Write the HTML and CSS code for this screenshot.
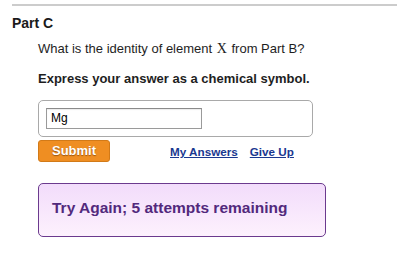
FILE: index.html
```
<!DOCTYPE html>
<html>
<head>
<meta charset="utf-8">
<link rel="stylesheet" href="styles.css">
</head>
<body>
<div class="page">
  <div class="rule"></div>
  <h2 class="part-title">Part C</h2>
  <div class="content">
    <p class="question">What is the identity of element <span class="math">X</span> from Part B?</p>
    <p class="instruction">Express your answer as a chemical symbol.</p>
    <div class="answer-box">
      <div class="answer-input">Mg</div>
    </div>
    <div class="actions">
      <button class="submit">Submit</button>
      <div class="links">
        <a class="link" href="#">My Answers</a>
        <a class="link" href="#">Give Up</a>
      </div>
    </div>
    <div class="feedback">Try Again; 5 attempts remaining</div>
  </div>
</div>
</body>
</html>
```
FILE: styles.css
```
html, body {
  margin: 0;
  padding: 0;
  background: #ffffff;
}
body {
  font-family: "Liberation Sans", Arial, sans-serif;
  color: #1e1e1e;
}
.page {
  padding: 4px 0 0 12px;
}
.rule {
  height: 2px;
  background: #cccccc;
}
.part-title {
  margin: 9px 0 0 0;
  font-size: 14px;
  line-height: 16px;
  font-weight: bold;
  color: #1a1a1a;
}
.content {
  padding-left: 26px;
}
.question {
  margin: 11px 0 0 0;
  font-size: 13px;
  line-height: 14px;
  color: #1e1e1e;
}
.math {
  font-family: "Liberation Serif", "Times New Roman", serif;
  font-size: 14px;
  padding: 0 1px;
}
.instruction {
  margin: 16px 0 0 0;
  font-size: 13px;
  line-height: 14px;
  font-weight: bold;
  color: #1e1e1e;
}
.answer-box {
  margin-top: 14px;
  width: 259px;
  padding: 7px;
  border: 1px solid #a9a9a9;
  border-radius: 5px;
}
.answer-input {
  width: 150px;
  height: 19px;
  border: 1px solid #9a9a9a;
  border-top-color: #8a8a8a;
  padding-left: 4px;
  font-size: 12px;
  line-height: 19px;
  color: #000000;
  box-shadow: inset 0 1px 1px rgba(0,0,0,0.08);
}
.actions {
  margin-top: 3px;
  display: flex;
  align-items: center;
}
.submit {
  width: 72px;
  height: 22px;
  margin: 0;
  padding: 0;
  border: 1px solid #d27a18;
  border-radius: 3px;
  background: #ef8e22;
  color: #ffffff;
  font-family: "Liberation Sans", Arial, sans-serif;
  font-size: 13px;
  font-weight: bold;
  line-height: 20px;
  text-shadow: 0 1px 1px rgba(90,40,0,0.55);
}
.links {
  display: flex;
  gap: 12px;
  margin-left: 60px;
  padding-top: 1px;
}
.link {
  font-size: 11.7px;
  font-weight: bold;
  color: #1a3890;
  text-decoration: underline;
}
.feedback {
  margin-top: 21px;
  width: 260px;
  padding: 15px 13px 19px 13px;
  border: 1px solid #6b3a8e;
  border-radius: 5px;
  background: linear-gradient(to bottom, #f2dcfb, #fdf1fd);
  color: #52297c;
  font-size: 15.5px;
  line-height: 18px;
  font-weight: bold;
}
```
